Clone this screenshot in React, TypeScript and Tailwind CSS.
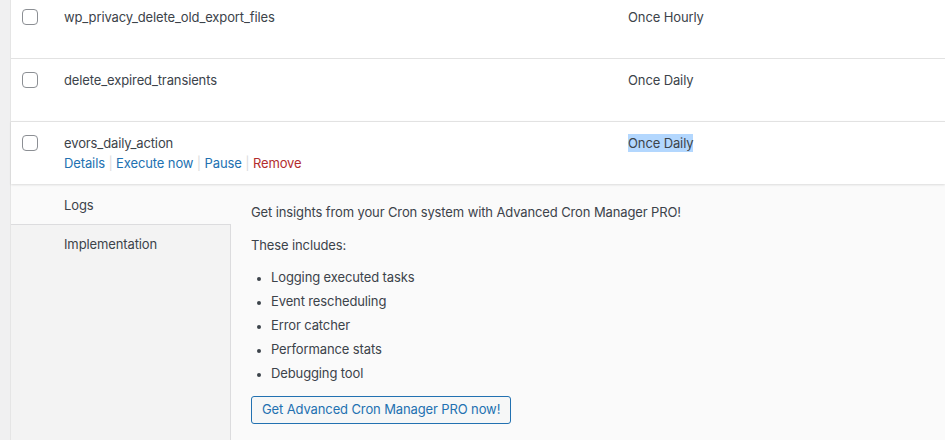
const font = { fontFamily: "Inter, 'Liberation Sans', sans-serif" };

function Checkbox() {
  return <div className="mt-[2px] h-4 w-4 shrink-0 rounded-[4px] border border-[#8c8f94] bg-white" />;
}

type Row = { name: string; schedule: string; first?: boolean; open?: boolean };

const rows: Row[] = [
  { name: "wp_privacy_delete_old_export_files", schedule: "Once Hourly", first: true },
  { name: "delete_expired_transients", schedule: "Once Daily" },
  { name: "evors_daily_action", schedule: "Once Daily", open: true },
];

function Sep() {
  return <span className="px-[3.5px] text-[#dcdcde]">|</span>;
}

function EventRow({ row }: { row: Row }) {
  return (
    <div
      className={
        row.first
          ? "flex h-[58px] pt-[7px]"
          : row.open
            ? "relative z-10 flex h-[63px] border-t border-[#e2e2e2] bg-white pt-[11px] shadow-[0_1px_2px_rgba(0,0,0,0.12)]"
            : "flex h-[63px] border-t border-[#e2e2e2] pt-[11px]"
      }
    >
      <div className="w-[53px] shrink-0 pl-[11px]">
        <Checkbox />
      </div>
      <div className="w-[564px] shrink-0">
        <div className="leading-5">{row.name}</div>
        {row.open ? (
          <div className="leading-5">
            <span className="text-[#2271b1]">Details</span>
            <Sep />
            <span className="text-[#2271b1]">Execute now</span>
            <Sep />
            <span className="text-[#2271b1]">Pause</span>
            <Sep />
            <span className="text-[#b32d2e]">Remove</span>
          </div>
        ) : null}
      </div>
      <div className="leading-5">
        {row.open ? <span className="bg-[#b3d7fe] py-[1px]">{row.schedule}</span> : row.schedule}
      </div>
    </div>
  );
}

const features = [
  "Logging executed tasks",
  "Event rescheduling",
  "Error catcher",
  "Performance stats",
  "Debugging tool",
];

function Details() {
  return (
    <div className="flex min-h-[256px] bg-[#fafafa]">
      <div className="flex w-[220px] shrink-0 flex-col">
        <div className="h-[41px] border-b border-[#dcdcde] pl-[53px] pt-[11px] leading-5">Logs</div>
        <div className="flex-1 border-r border-[#dcdcde] bg-[#f3f3f3] pl-[53px] pt-[9px] leading-5">
          Implementation
        </div>
      </div>
      <div className="pl-[20px] pt-[18px]">
        <p className="leading-5">Get insights from your Cron system with Advanced Cron Manager PRO!</p>
        <p className="mt-[13px] leading-5">These includes:</p>
        <ul className="mt-[10px] list-disc pl-5">
          {features.map((f) => (
            <li key={f} className="h-6 leading-6 marker:text-[11px]">
              {f}
            </li>
          ))}
        </ul>
        <button className="mt-[11px] h-7 rounded-[3px] border border-[#2271b1] bg-[#f6f7f7] px-[10px] text-[13px] tracking-[-0.12px] text-[#2271b1]">
          Get Advanced Cron Manager PRO now!
        </button>
      </div>
    </div>
  );
}

export default function App() {
  return (
    <div
      className="h-[440px] overflow-hidden bg-[#f0f0f1] pl-[10px] text-[13px] tracking-[-0.12px] text-[#3c434a]"
      style={font}
    >
      <div className="h-full border-l border-[#e5e5e5] bg-white">
        {rows.map((r) => (
          <EventRow key={r.name} row={r} />
        ))}
        <Details />
      </div>
    </div>
  );
}
